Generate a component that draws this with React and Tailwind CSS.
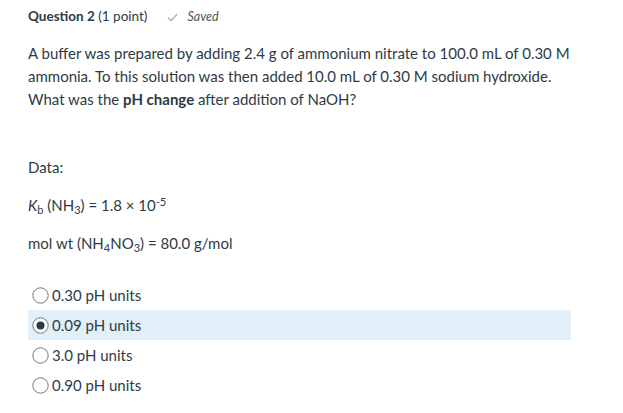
import React from "react";

const options = [
  { label: "0.30 pH units", checked: false },
  { label: "0.09 pH units", checked: true },
  { label: "3.0 pH units", checked: false },
  { label: "0.90 pH units", checked: false },
];

function Radio({ checked }) {
  return (
    <svg width="17" height="17" viewBox="0 0 17 17" className="shrink-0">
      <circle cx="8.5" cy="8.5" r="7.7" fill="#fff" stroke="#6b7780" strokeWidth="1" />
      {checked && <circle cx="8.5" cy="8.5" r="4" fill="#2d3b45" />}
    </svg>
  );
}

export default function App() {
  return (
    <div className="w-[623px] h-[413px] bg-white text-[#2d3b45] overflow-hidden" style={{ fontFamily: "Lato, 'Noto Sans', sans-serif" }}>
      <div className="pl-[28px] pt-[6px] flex items-baseline h-[22px]">
        <span className="text-[13.5px]"><span className="font-bold">Question 2</span> (1 point)</span>
        <span className="ml-[20px] flex items-baseline gap-[9px] text-[12.5px] italic text-[#4b555c]">
          <svg width="11" height="9" viewBox="0 0 11 9" className="self-center mt-[1px]"><path d="M1 4.6 L4 7.6 L10 1.2" fill="none" stroke="#a3abb1" strokeWidth="1.3" /></svg>
          Saved
        </span>
      </div>
      <div className="pl-[28px] w-[570px] mt-[20px] text-[15px] leading-[23px]">
        <p>A buffer was prepared by adding 2.4 g of ammonium nitrate to 100.0 mL of 0.30 M ammonia. To this solution was then added 10.0 mL of 0.30 M sodium hydroxide. What was the <b>pH change</b> after addition of NaOH?</p>
        <p className="mt-[45px]">Data:</p>
        <p className="mt-[15px]"><i>K</i><sub className="text-[11px]">b</sub> (NH<sub className="text-[11px]">3</sub>) = 1.8 × 10<sup className="text-[11px]">-5</sup></p>
        <p className="mt-[15px]">mol wt (NH<sub className="text-[11px]">4</sub>NO<sub className="text-[11px]">3</sub>) = 80.0 g/mol</p>
      </div>
      <div className="mt-[25px] pl-[28px] w-[571px] flex flex-col text-[15px]">
        {options.map((o) => (
          <div key={o.label} className={`h-[30px] flex items-center gap-[3px] pl-[4px] ${o.checked ? "bg-[#e2eef8]" : ""}`}>
            <Radio checked={o.checked} />
            <span>{o.label}</span>
          </div>
        ))}
      </div>
    </div>
  );
}
